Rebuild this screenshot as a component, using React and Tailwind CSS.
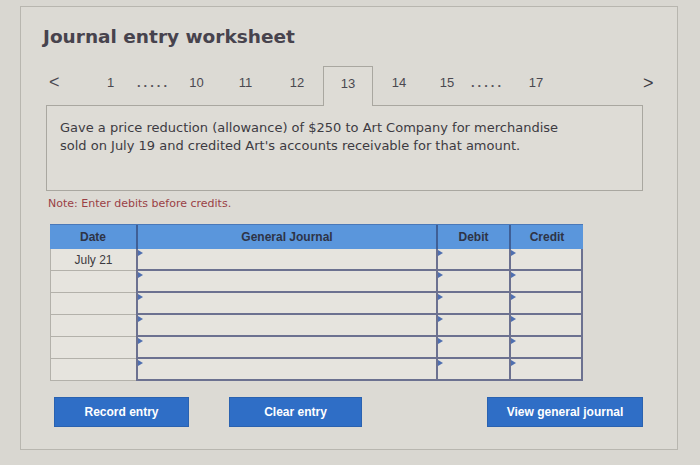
import React from 'react';

const tabs = [
  { label: '<', w: 'w-[44px]', cls: 'justify-start pl-[3px] text-[18px] text-[#3e3c44]' },
  { label: '1', w: 'w-[41px]' },
  { label: '.....', w: 'w-[42px]', dots: true },
  { label: '10', w: 'w-[47px]' },
  { label: '11', w: 'w-[51px]' },
  { label: '12', w: 'w-[52px]' },
  { label: '13', w: 'w-[50px]', active: true },
  { label: '14', w: 'w-[52px]' },
  { label: '15', w: 'w-[44px]' },
  { label: '.....', w: 'w-[34px]', dots: true },
  { label: '17', w: 'w-[66px]' },
  { label: '', w: 'w-[74px]' },
];

function Marker() {
  return (
    <span className="absolute left-0 top-[1px] w-0 h-0 border-t-[3px] border-b-[3px] border-l-[5px] border-t-transparent border-b-transparent border-l-[#4f6fb0]" />
  );
}

export default function App() {
  const rows = [0, 1, 2, 3, 4, 5];
  return (
    <div className="w-[700px] h-[465px] bg-[#d9d7d1] pt-[6px] overflow-hidden" style={{ fontFamily: '"DejaVu Sans", Verdana, sans-serif' }}>
      <div className="ml-[20px] w-[658px] h-[444px] border border-[#b8b6af] bg-[#dcdad4]">
        <h1 className="pl-[22px] pt-[18px] text-[18.5px] leading-[24px] font-bold text-[#47434d]">
          Journal entry worksheet
        </h1>

        {/* step tabs */}
        <div className="ml-[25px] mt-[17px] flex h-[40px]" style={{ fontFamily: '"Liberation Sans", Arial, sans-serif' }}>
          {tabs.map((t, i) => (
            <div
              key={i}
              className={
                'flex items-center pb-[6px] text-[13px] text-[#4a4850] ' +
                t.w + ' ' +
                (t.active
                  ? 'justify-center border-l border-t border-r border-[#a9a7a0] bg-[#dedcd6]'
                  : 'border-b border-[#a9a7a0] ' + (t.cls || 'justify-center'))
              }
            >
              {t.dots ? (
                <span className="font-bold tracking-[3px] pl-[3px] text-[#55535a]">{t.label}</span>
              ) : (
                t.label
              )}
            </div>
          ))}
          <div className="flex items-center pb-[6px] text-[18px] text-[#3e3c44]">&gt;</div>
        </div>

        <div className="ml-[25px] w-[597px] h-[85px] border-l border-r border-b border-[#a9a7a0] bg-[#dedcd6] pl-[13px] pt-[13px] text-[13px] leading-[18px] text-[#3d3b42]">
          <p>Gave a price reduction (allowance) of $250 to Art Company for merchandise</p>
          <p>sold on July 19 and credited Art's accounts receivable for that amount.</p>
        </div>

        <p className="pl-[27px] mt-[6px] text-[11px] leading-[14px] text-[#9a3f45]">
          Note: Enter debits before credits.
        </p>

        {/* journal table */}
        <div className="ml-[29px] mt-[13px] w-[533px]" style={{ fontFamily: '"Liberation Sans", Arial, sans-serif' }}>
          <div className="grid grid-cols-[86px_300px_73px_74px] h-[25px] bg-[#5a96dc] border-t border-[#4a78b8] text-[12px] font-bold text-[#2e3446]">
            <div className="flex items-center justify-center">Date</div>
            <div className="flex items-center justify-center border-l-2 border-[#3f5f96]">General Journal</div>
            <div className="flex items-center justify-center border-l-2 border-[#3f5f96]">Debit</div>
            <div className="flex items-center justify-center border-l-2 border-[#3f5f96]">Credit</div>
          </div>
          {rows.map((r) => (
            <div key={r} className="grid grid-cols-[86px_300px_73px_74px] h-[22px]">
              <div className="flex items-center justify-center bg-[#e6e4de] border-l border-b border-[#b3b1aa] text-[12px] text-[#3c3a40]">
                {r === 0 ? 'July 21' : ''}
              </div>
              <div className="relative bg-[#e6e4de] border-l-2 border-b-2 border-[#6c7190]"><Marker /></div>
              <div className="relative bg-[#e6e4de] border-l-2 border-b-2 border-[#6c7190]"><Marker /></div>
              <div className="relative bg-[#e6e4de] border-l-2 border-r-2 border-b-2 border-[#6c7190]"><Marker /></div>
            </div>
          ))}
        </div>

        <div className="flex pl-[33px] mt-[16px] text-[12px] font-bold text-white" style={{ fontFamily: '"Liberation Sans", Arial, sans-serif' }}>
          <button className="w-[135px] h-[30px] bg-[#2f6ec6] border border-[#2a62b0]">Record entry</button>
          <button className="ml-[40px] w-[133px] h-[30px] bg-[#2f6ec6] border border-[#2a62b0]">Clear entry</button>
          <button className="ml-[125px] w-[156px] h-[30px] bg-[#2f6ec6] border border-[#2a62b0]">View general journal</button>
        </div>
      </div>
    </div>
  );
}
